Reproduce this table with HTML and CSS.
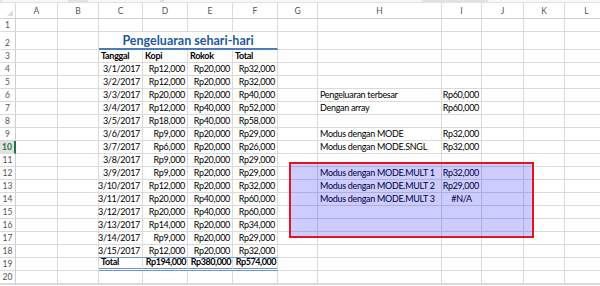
FILE: index.html
```html
<!DOCTYPE html>
<html>
<head>
<meta charset="utf-8">
<link rel="stylesheet" href="styles.css">
</head>
<body>
<div class="band"><span class="tab t1"></span><span class="tab t2"></span><span class="tab t3"></span><span class="tab t4"></span></div>
<div class="sheet">
  <div class="row hdr"><span class="corner"></span><span>A</span><span>B</span><span>C</span><span>D</span><span>E</span><span>F</span><span>G</span><span>H</span><span>I</span><span>J</span><span>K</span><span>L</span></div>
  <div class="row"><span class="rh">1</span><span></span><span></span><span></span><span></span><span></span><span></span><span></span><span></span><span></span><span></span><span></span><span></span></div>
  <div class="row"><span class="rh">2</span><span></span><span></span><span class="title">Pengeluaran sehari-hari</span><span></span><span></span><span></span><span></span><span></span><span></span></div>
  <div class="row"><span class="rh">3</span><span></span><span></span><span class="b">Tanggal</span><span class="b">Kopi</span><span class="b">Rokok</span><span class="b">Total</span><span></span><span></span><span></span><span></span><span></span><span></span></div>
  <div class="row"><span class="rh">4</span><span></span><span></span><span class="r">3/1/2017</span><span class="r">Rp12,000</span><span class="r">Rp20,000</span><span class="r">Rp32,000</span><span></span><span></span><span></span><span></span><span></span><span></span></div>
  <div class="row"><span class="rh">5</span><span></span><span></span><span class="r">3/2/2017</span><span class="r">Rp12,000</span><span class="r">Rp20,000</span><span class="r">Rp32,000</span><span></span><span></span><span></span><span></span><span></span><span></span></div>
  <div class="row"><span class="rh">6</span><span></span><span></span><span class="r">3/3/2017</span><span class="r">Rp20,000</span><span class="r">Rp20,000</span><span class="r">Rp40,000</span><span></span><span>Pengeluaran terbesar</span><span class="r">Rp60,000</span><span></span><span></span><span></span></div>
  <div class="row"><span class="rh">7</span><span></span><span></span><span class="r">3/4/2017</span><span class="r">Rp12,000</span><span class="r">Rp40,000</span><span class="r">Rp52,000</span><span></span><span>Dengan array</span><span class="r">Rp60,000</span><span></span><span></span><span></span></div>
  <div class="row"><span class="rh">8</span><span></span><span></span><span class="r">3/5/2017</span><span class="r">Rp18,000</span><span class="r">Rp40,000</span><span class="r">Rp58,000</span><span></span><span></span><span></span><span></span><span></span><span></span></div>
  <div class="row"><span class="rh">9</span><span></span><span></span><span class="r">3/6/2017</span><span class="r">Rp9,000</span><span class="r">Rp20,000</span><span class="r">Rp29,000</span><span></span><span>Modus dengan MODE</span><span class="r">Rp32,000</span><span></span><span></span><span></span></div>
  <div class="row"><span class="rh act">10</span><span></span><span></span><span class="r">3/7/2017</span><span class="r">Rp6,000</span><span class="r">Rp20,000</span><span class="r">Rp26,000</span><span></span><span>Modus dengan MODE.SNGL</span><span class="r">Rp32,000</span><span></span><span></span><span></span></div>
  <div class="row"><span class="rh">11</span><span></span><span></span><span class="r">3/8/2017</span><span class="r">Rp9,000</span><span class="r">Rp20,000</span><span class="r">Rp29,000</span><span></span><span></span><span></span><span></span><span></span><span></span></div>
  <div class="row"><span class="rh">12</span><span></span><span></span><span class="r">3/9/2017</span><span class="r">Rp9,000</span><span class="r">Rp20,000</span><span class="r">Rp29,000</span><span></span><span>Modus dengan MODE.MULT 1</span><span class="r">Rp32,000</span><span></span><span></span><span></span></div>
  <div class="row"><span class="rh">13</span><span></span><span></span><span class="r">3/10/2017</span><span class="r">Rp12,000</span><span class="r">Rp20,000</span><span class="r">Rp32,000</span><span></span><span>Modus dengan MODE.MULT 2</span><span class="r">Rp29,000</span><span></span><span></span><span></span></div>
  <div class="row"><span class="rh">14</span><span></span><span></span><span class="r">3/11/2017</span><span class="r">Rp20,000</span><span class="r">Rp40,000</span><span class="r">Rp60,000</span><span></span><span>Modus dengan MODE.MULT 3</span><span class="ctr">#N/A</span><span></span><span></span><span></span></div>
  <div class="row"><span class="rh">15</span><span></span><span></span><span class="r">3/12/2017</span><span class="r">Rp20,000</span><span class="r">Rp40,000</span><span class="r">Rp60,000</span><span></span><span></span><span></span><span></span><span></span><span></span></div>
  <div class="row"><span class="rh">16</span><span></span><span></span><span class="r">3/13/2017</span><span class="r">Rp14,000</span><span class="r">Rp20,000</span><span class="r">Rp34,000</span><span></span><span></span><span></span><span></span><span></span><span></span></div>
  <div class="row"><span class="rh">17</span><span></span><span></span><span class="r">3/14/2017</span><span class="r">Rp9,000</span><span class="r">Rp20,000</span><span class="r">Rp29,000</span><span></span><span></span><span></span><span></span><span></span><span></span></div>
  <div class="row"><span class="rh">18</span><span></span><span></span><span class="r tt">3/15/2017</span><span class="r tt">Rp12,000</span><span class="r tt">Rp20,000</span><span class="r tt">Rp32,000</span><span></span><span></span><span></span><span></span><span></span><span></span></div>
  <div class="row"><span class="rh">19</span><span></span><span></span><span class="b tot">Total</span><span class="b r tot">Rp194,000</span><span class="b r tot">Rp380,000</span><span class="b r tot">Rp574,000</span><span></span><span></span><span></span><span></span><span></span><span></span></div>
  <div class="row"><span class="rh">20</span><span></span><span></span><span></span><span></span><span></span><span></span><span></span><span></span><span></span><span></span><span></span><span></span></div>
  <div class="row"><span class="rh"></span><span></span><span></span><span></span><span></span><span></span><span></span><span></span><span></span><span></span><span></span><span></span><span></span></div>
  <div class="sel"></div>
</div>
</body>
</html>
```
FILE: styles.css
```css
html, body {
  margin: 0;
  padding: 0;
  background: #ffffff;
}
body {
  font-family: Lato, "Open Sans", sans-serif;
  font-size: 9px;
  color: #000;
  overflow: hidden;
}
.band {
  height: 3px;
  background: #e2e2e2;
  position: relative;
}
.tab {
  position: absolute;
  top: 0;
  height: 2px;
  background: #f7f7f7;
}
.t1 { left: 2px; width: 66px; }
.t2 { left: 88px; width: 72px; }
.t3 { left: 164px; width: 258px; }
.t4 { left: 488px; width: 112px; }
.sheet {
  display: grid;
  grid-template-columns: 16px 42px 41px 44px 45px 45px 45px 40px 124px 40px 42px 41px 44px;
  grid-template-rows: 16px 13px 18px repeat(18, 13px);
  position: relative;
}
.row {
  display: contents;
}
.row > span {
  box-sizing: border-box;
  border-right: 1px solid #dadada;
  border-bottom: 1px solid #dadada;
  padding: 0 2px;
  white-space: nowrap;
  line-height: 12px;
  letter-spacing: -0.3px;
  overflow: visible;
  display: flex;
  align-items: flex-end;
}
.hdr > span {
  justify-content: center;
  align-items: center;
  color: #555;
  font-size: 8.5px;
  letter-spacing: 0;
  border-bottom-color: #d0d0d0;
}
.hdr > .corner {
  justify-content: flex-end;
  align-items: flex-end;
  padding: 0 2px 2px 0;
}
.corner::after {
  content: "";
  width: 0;
  height: 0;
  border-left: 6px solid transparent;
  border-bottom: 6px solid #dedede;
}
.row > .rh {
  justify-content: center;
  color: #555;
  padding: 0;
  font-size: 8.5px;
  letter-spacing: 0;
  border-right-color: #cfcfcf;
}
.row > .act {
  background: #e1e1e1;
  color: #217346;
  font-weight: 700;
  border-right: 2px solid #217346;
}
.row > .r {
  justify-content: flex-end;
}
.row > .ctr {
  justify-content: center;
}
.b {
  font-weight: 700;
}
.row > .b.r {
  padding-right: 1px;
  letter-spacing: -0.45px;
}
.row > .title {
  grid-column: span 4;
  justify-content: center;
  align-items: flex-end;
  font-size: 12.5px;
  font-weight: 700;
  line-height: 15px;
  letter-spacing: 0;
  color: #2358a0;
  border-bottom: 2px solid #4a7ebb;
}
.row > .tt {
  border-bottom-color: #6d95cc;
}
.row > .tot {
  border-bottom: 3px double #6d95cc;
}
.sel {
  position: absolute;
  left: 289px;
  top: 159px;
  width: 245px;
  height: 76px;
  box-sizing: border-box;
  border: 2px solid #e8141b;
  background: rgba(0, 0, 255, 0.2);
}
```
